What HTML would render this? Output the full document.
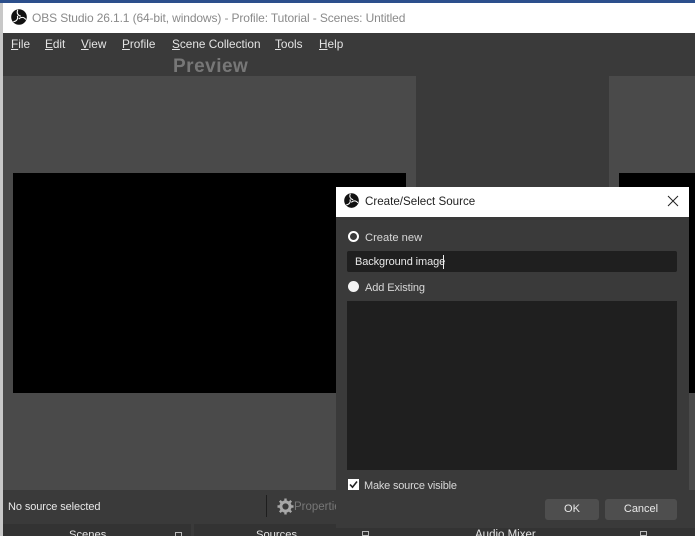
<!DOCTYPE html>
<html><head><meta charset="utf-8"><style>
html,body{margin:0;padding:0;background:#3a3a3a}
#r{position:relative;width:695px;height:536px;overflow:hidden;background:#3a3a3a;font-family:"Liberation Sans",sans-serif;font-size:12px;color:#fff}
#r div,#r svg{position:absolute}
.t{white-space:nowrap;line-height:14px}
u{text-decoration:underline}
.m{color:#e4e4e4;font-size:11.8px;top:37px}
</style></head><body><div id="r">
<svg width="0" height="0" style="left:0;top:0"><defs><g id="logo"><circle cx="8" cy="8" r="7.8" fill="#111"/><g fill="none" stroke="#fff" stroke-width="1.1"><path d="M9.8 7.2C7.2 6.6 5.2 4.2 6.8 .8"/><path d="M9.8 7.2C7.2 6.6 5.2 4.2 6.8 .8" transform="rotate(120 8 8)"/><path d="M9.8 7.2C7.2 6.6 5.2 4.2 6.8 .8" transform="rotate(240 8 8)"/></g></g></defs></svg>
<div style="left:0;top:0;width:695px;height:3px;background:#2c4f8c"></div>
<div style="left:0;top:3px;width:3px;height:533px;background:#c8c8c8"></div>
<div style="left:3px;top:3px;width:692px;height:30px;background:#fff"></div>
<svg style="left:11px;top:9px" width="16" height="16" viewBox="0 0 16 16"><use href="#logo"/></svg>
<div class="t" style="left:32px;top:11px;color:#8a8a8a;font-size:12px;letter-spacing:-.12px">OBS Studio 26.1.1 (64-bit, windows) - Profile: Tutorial - Scenes: Untitled</div>
<div class="t m" style="left:11px"><u>F</u>ile</div>
<div class="t m" style="left:45px"><u>E</u>dit</div>
<div class="t m" style="left:81px"><u>V</u>iew</div>
<div class="t m" style="left:122px"><u>P</u>rofile</div>
<div class="t m" style="left:172px"><u>S</u>cene Collection</div>
<div class="t m" style="left:275px"><u>T</u>ools</div>
<div class="t m" style="left:319px"><u>H</u>elp</div>
<div class="t" style="left:173px;top:57px;color:#777;font-size:19px;font-weight:bold;line-height:20px;letter-spacing:.5px">Preview</div>
<div style="left:3px;top:76px;width:413px;height:414px;background:#4a4a4a"></div>
<div style="left:609px;top:76px;width:86px;height:414px;background:#4a4a4a"></div>
<div style="left:13px;top:173px;width:393px;height:220px;background:#000"></div>
<div style="left:619px;top:173px;width:76px;height:220px;background:#000"></div>
<div style="left:3px;top:490px;width:692px;height:34px;background:#3a3a3a"></div>
<div class="t" style="left:8px;top:500px;color:#e8e8e8;font-size:11px;letter-spacing:-.1px">No source selected</div>
<div style="left:266px;top:495px;width:1px;height:22px;background:#1e1e1e"></div>
<svg style="left:277px;top:498px" width="17" height="17" viewBox="0 0 17 17"><circle cx="8.5" cy="8.5" r="4.6" fill="none" stroke="#a8a8a8" stroke-width="3"/><g stroke="#a8a8a8" stroke-width="2.4"><path d="M8.5 0.5v3M8.5 13.5v3M0.5 8.5h3M13.5 8.5h3M2.8 2.8l2.2 2.2M12 12l2.2 2.2M14.2 2.8L12 5M5 12l-2.2 2.2"/></g></svg>
<div class="t" style="left:294px;top:500px;color:#777;font-size:11.5px">Properties</div>
<div style="left:3px;top:524px;width:188px;height:12px;background:#333"></div>
<div style="left:194px;top:524px;width:142px;height:12px;background:#333"></div>
<div class="t" style="left:69px;top:528px;color:#e4e4e4;font-size:11.2px">Scenes</div>
<div class="t" style="left:256px;top:528px;color:#e4e4e4;font-size:11.2px">Sources</div>
<div style="left:175px;top:532px;width:7px;height:5px;border:1px solid #bbb;box-sizing:border-box"></div>
<div style="left:336px;top:528px;width:359px;height:8px;background:#333"></div>
<div class="t" style="left:475px;top:528px;color:#e4e4e4;font-size:11.5px">Audio Mixer</div>
<div style="left:362px;top:531px;width:7px;height:5px;border:1px solid #bbb;box-sizing:border-box"></div>
<div style="left:640px;top:531px;width:7px;height:5px;border:1px solid #bbb;box-sizing:border-box"></div>

<div style="left:336px;top:187px;width:353px;height:30px;background:#fff"></div>
<svg style="left:344px;top:193px" width="15" height="15" viewBox="0 0 16 16"><use href="#logo"/></svg>
<div class="t" style="left:365px;top:195px;color:#222;font-size:11.6px">Create/Select Source</div>
<svg style="left:667px;top:195px" width="12" height="12" viewBox="0 0 12 12"><path d="M1 1L11 11M11 1L1 11" stroke="#222" stroke-width="1" fill="none"/></svg>
<div style="left:336px;top:217px;width:353px;height:311px;background:#3a3a3a"></div>
<div style="left:348px;top:231px;width:11px;height:11px;border-radius:50%;border:2.5px solid #fff;box-sizing:border-box;background:#3a3a3a"></div>
<div class="t" style="left:365px;top:231px;color:#d8d8d8;font-size:11.2px">Create new</div>
<div style="left:347px;top:251px;width:330px;height:21px;background:#1f1f1f;border-radius:2px"></div>
<div class="t" style="left:355px;top:255px;color:#e8e8e8;font-size:11px;letter-spacing:-.1px">Background image</div>
<div style="left:443px;top:255px;width:1px;height:14px;background:#eee"></div>
<div style="left:348px;top:281px;width:11px;height:11px;border-radius:50%;background:#f4f4f4"></div>
<div class="t" style="left:365px;top:281px;color:#d8d8d8;font-size:11px;letter-spacing:-.1px">Add Existing</div>
<div style="left:347px;top:301px;width:330px;height:169px;background:#1f1f1f"></div>
<div style="left:348px;top:479px;width:11px;height:11px;background:#fff"></div>
<svg style="left:348px;top:479px" width="11" height="11" viewBox="0 0 11 11"><path d="M2 5.5L4.5 8.2L9 2.5" stroke="#222" stroke-width="1.6" fill="none"/></svg>
<div class="t" style="left:364px;top:479px;color:#d8d8d8;font-size:11px;letter-spacing:-.2px">Make source visible</div>
<div class="t" style="left:545px;top:499px;width:54px;height:21px;line-height:21px;background:#4e4e4e;border-radius:3px;text-align:center;color:#e8e8e8;font-size:11px">OK</div>
<div class="t" style="left:605px;top:499px;width:72px;height:21px;line-height:21px;background:#4e4e4e;border-radius:3px;text-align:center;color:#e8e8e8;font-size:11px">Cancel</div>
</div></body></html>
